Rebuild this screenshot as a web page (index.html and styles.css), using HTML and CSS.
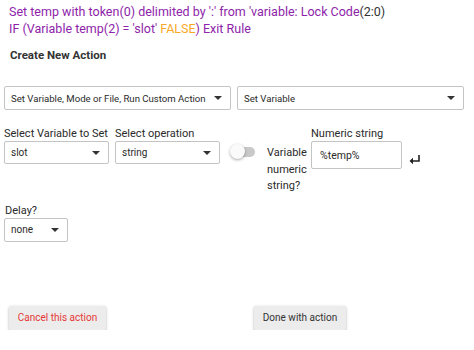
FILE: index.html
```html
<!DOCTYPE html>
<html>
  <head>
    <meta charset="UTF-8">
    <title>Create New Action</title>
    <link rel="stylesheet" href="styles.css">
  </head>
  <body>
    <div id="rules">
      <div class="rule-line">Set temp with token(0) delimited by ':' from 'variable: Lock Code<span class="plain">(2:0)</span></div>
      <div class="rule-line">IF (Variable temp(2) = 'slot' <span class="false">FALSE</span>) Exit Rule</div>
    </div>

    <div class="heading">Create New Action</div>

    <div class="row top-row">
      <div class="select wide"><span>Set Variable, Mode or File, Run Custom Action</span><i class="arrow"></i></div>
      <div class="select wide"><span>Set Variable</span><i class="arrow"></i></div>
    </div>

    <div class="row options-row">
      <div class="field">
        <div class="label">Select Variable to Set</div>
        <div class="select small"><span>slot</span><i class="arrow"></i></div>
      </div>
      <div class="field">
        <div class="label">Select operation</div>
        <div class="select small"><span>string</span><i class="arrow"></i></div>
      </div>
      <div class="toggle-wrap">
        <div class="toggle"><div class="track"></div><div class="thumb"></div></div>
        <div class="toggle-label">Variable numeric string?</div>
      </div>
      <div class="field">
        <div class="label">Numeric string</div>
        <div class="text-input">%temp%</div>
      </div>
      <svg class="enter-icon" width="12" height="10" viewBox="0 0 12 10">
        <path d="M10 0 V6 H3" fill="none" stroke="#222" stroke-width="1.6"/>
        <path d="M0.5 6 L4 2.8 V9.2 Z" fill="#222"/>
      </svg>
    </div>

    <div class="field delay">
      <div class="label">Delay?</div>
      <div class="select tiny"><span>none</span><i class="arrow"></i></div>
    </div>

    <div class="buttons">
      <button class="btn cancel">Cancel this action</button>
      <button class="btn done">Done with action</button>
    </div>
  </body>
</html>
```

FILE: styles.css
```css
/* page */
body {
  margin: 0;
  padding: 3px 4px 0 4px;
  font-family: Roboto, "Noto Sans", sans-serif;
  color: #222;
  background: #fff;
}

/* rule summary at the top */
#rules {
  padding-left: 5px;
  font-size: 12.5px;
  line-height: 17px;
  color: #8e24aa;
}

.plain {
  color: #333;
}

.false {
  color: #f9a825;
}

.heading {
  margin: 11px 0 0 6px;
  font-size: 11.5px;
  font-weight: bold;
  color: #333;
}

/* selects */
.row {
  display: flex;
}

.top-row {
  margin-top: 24px;
  gap: 6px;
}

.select {
  display: flex;
  flex-shrink: 0;
  align-items: center;
  justify-content: space-between;
  box-sizing: border-box;
  height: 24px;
  padding: 0 8px 0 6px;
  border: 1px solid #c4c4c4;
  border-radius: 2px;
  background: #fff;
  font-size: 9.6px;
  color: #2a2a2a;
  white-space: nowrap;
}

.select.wide {
  width: 227px;
}

.select.small {
  width: 105px;
  height: 23px;
  font-size: 10px;
}

.select.tiny {
  width: 64px;
  height: 24px;
  font-size: 10px;
}

.arrow {
  width: 0;
  height: 0;
  border-left: 4px solid transparent;
  border-right: 4px solid transparent;
  border-top: 4px solid #333;
}

/* second row */
.options-row {
  margin-top: 17px;
  align-items: flex-start;
}

.field {
  flex-shrink: 0;
  margin-right: 6px;
}

.label {
  font-size: 11px;
  line-height: 14px;
  color: #2a2a2a;
  white-space: nowrap;
}

.toggle-wrap {
  display: flex;
  flex-shrink: 0;
  align-items: flex-start;
  margin: 17px 0 0 4px;
}

.toggle {
  position: relative;
  width: 26px;
  height: 20px;
  margin-right: 11px;
}

.track {
  position: absolute;
  left: 5px;
  top: 3px;
  width: 20px;
  height: 10px;
  border-radius: 5px;
  background: #c9c9c9;
}

.thumb {
  position: absolute;
  left: 0;
  top: 0;
  width: 15px;
  height: 15px;
  border-radius: 50%;
  background: #fafafa;
  box-shadow: 0 1px 3px rgba(0, 0, 0, 0.35);
}

.toggle-label {
  width: 40px;
  margin-top: 1px;
  font-size: 11px;
  line-height: 16.5px;
  color: #2a2a2a;
}

.toggle-wrap + .field {
  margin-left: 4px;
}

.text-input {
  box-sizing: border-box;
  width: 91px;
  height: 28px;
  padding: 7px 0 0 8px;
  border: 1px solid #c4c4c4;
  border-radius: 2px;
  font-size: 10.5px;
  color: #2a2a2a;
}

.enter-icon {
  flex-shrink: 0;
  margin: 28px 0 0 1px;
}

/* delay */
.delay {
  margin-top: 9px;
}

.delay .label {
  margin-left: 1px;
}

/* bottom buttons */
.buttons {
  display: flex;
  margin: 64px 0 0 5px;
}

.btn {
  height: 24px;
  padding: 0;
  border: none;
  border-radius: 2px;
  background: #ececec;
  box-shadow: 0 1px 3px rgba(0, 0, 0, 0.3);
  font-family: Roboto, "Noto Sans", sans-serif;
  font-size: 10px;
  white-space: nowrap;
}

.cancel {
  width: 97px;
  color: #e53935;
}

.done {
  width: 92px;
  margin-left: 148px;
  color: #333;
}
```
